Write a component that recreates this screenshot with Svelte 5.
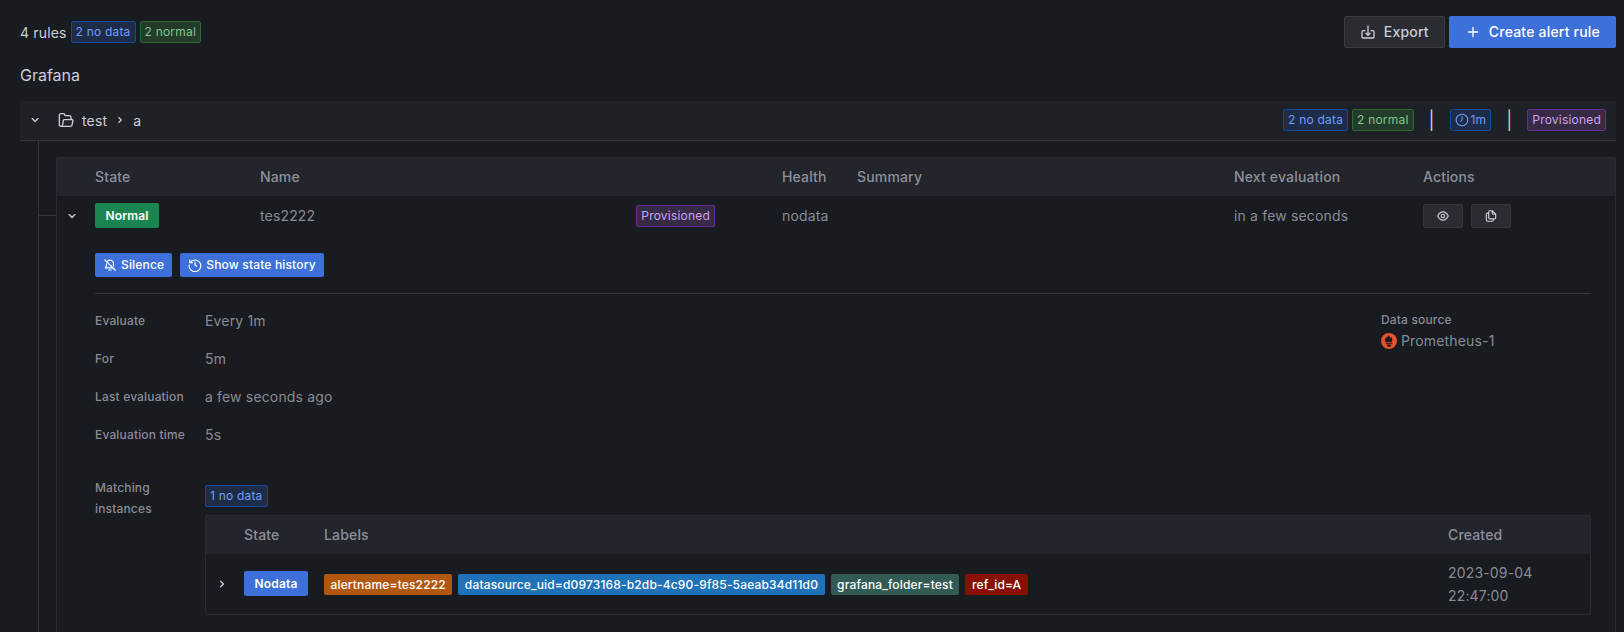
<script>
  const labels = [
    { text: 'alertname=tes2222', color: '#b2570f' },
    { text: 'datasource_uid=d0973168-b2db-4c90-9f85-5aeab34d11d0', color: '#1f72b8' },
    { text: 'grafana_folder=test', color: '#315b54' },
    { text: 'ref_id=A', color: '#890f02' }
  ];
  const details = [
    ['Evaluate', 'Every 1m'],
    ['For', '5m'],
    ['Last evaluation', 'a few seconds ago'],
    ['Evaluation time', '5s']
  ];
</script>

{#snippet down(size)}
  <svg width={size} height={size} viewBox="0 0 24 24" fill="currentColor"><path d="M17,9.17a1,1,0,0,0-1.41,0L12,12.71,8.46,9.17a1,1,0,0,0-1.41,0,1,1,0,0,0,0,1.42l4.24,4.24a1,1,0,0,0,1.42,0L17,10.59A1,1,0,0,0,17,9.17Z"/></svg>
{/snippet}
{#snippet right(size)}
  <svg width={size} height={size} viewBox="0 0 24 24" fill="currentColor"><path d="M14.83,11.29,10.59,7.05a1,1,0,0,0-1.42,0,1,1,0,0,0,0,1.41L12.71,12,9.17,15.54a1,1,0,0,0,0,1.41,1,1,0,0,0,.71.29,1,1,0,0,0,.71-.29l4.24-4.24A1,1,0,0,0,14.83,11.29Z"/></svg>
{/snippet}

<div class="page">
  <div class="top">
    <div class="summary">
      <span class="count">4 rules</span>
      <span class="badge blue">2 no data</span>
      <span class="badge green">2 normal</span>
    </div>
    <div class="top-actions">
      <button class="btn secondary">
        <svg width="16" height="16" viewBox="0 0 24 24" fill="currentColor"><path d="M19,9H16.5a1,1,0,0,0,0,2H19a1,1,0,0,1,1,1v7a1,1,0,0,1-1,1H5a1,1,0,0,1-1-1V12a1,1,0,0,1,1-1H7.5a1,1,0,0,0,0-2H5a3,3,0,0,0-3,3v7a3,3,0,0,0,3,3H19a3,3,0,0,0,3-3V12A3,3,0,0,0,19,9ZM8.29,13.29a1,1,0,0,0,0,1.42l3,3a1,1,0,0,0,1.42,0l3-3a1,1,0,0,0-1.42-1.42L13,14.59V3a1,1,0,0,0-2,0V14.59l-1.29-1.3A1,1,0,0,0,8.29,13.29Z"/></svg>
        Export
      </button>
      <button class="btn primary">
        <svg width="16" height="16" viewBox="0 0 24 24" fill="currentColor"><path d="M19,11H13V5a1,1,0,0,0-2,0v6H5a1,1,0,0,0,0,2h6v6a1,1,0,0,0,2,0V13h6a1,1,0,0,0,0-2Z"/></svg>
        Create alert rule
      </button>
    </div>
  </div>

  <h2 class="ds-title">Grafana</h2>

  <div class="group-head">
    <span class="group-chevron">{@render down(16)}</span>
    <svg class="folder" width="16" height="16" viewBox="0 0 24 24" fill="none" stroke="currentColor" stroke-width="2" stroke-linejoin="round" stroke-linecap="round"><path d="M4.500 21.500A2.500 2.500 0 0 1 2 19V5a2.500 2.500 0 0 1 2.500-2.500h3.600a2 2 0 0 1 1.900 1.400l.5 1.600H17a2.500 2.500 0 0 1 2.500 2.500v3"/><path d="M4.500 21.500c1.200 0 2.100-.8 2.300-2l1.300-7a1.500 1.500 0 0 1 1.500-1h11.800a1 1 0 0 1 1 1.200l-1.400 7a2.400 2.400 0 0 1-2.400 1.800Z"/></svg>
    <span class="crumb">test</span>
    <span class="crumb-sep">{@render right(14)}</span>
    <span class="crumb">a</span>
    <div class="group-meta">
      <span class="badge blue">2 no data</span>
      <span class="badge green">2 normal</span>
      <span class="pipe first">|</span>
      <span class="badge blue clock">
        <svg width="14" height="14" viewBox="0 0 24 24" fill="none" stroke="currentColor" stroke-width="1.800"><circle cx="12" cy="12" r="10"/><path d="M12 6v6l-3 3"/></svg>1m
      </span>
      <span class="pipe second">|</span>
      <span class="badge purple">Provisioned</span>
    </div>
  </div>

  <div class="tree">
    <div class="branch"></div>
    <div class="rule-card">
      <div class="rule-grid rule-head">
        <span></span><span>State</span><span>Name</span><span>Health</span><span>Summary</span><span>Next evaluation</span><span>Actions</span>
      </div>
      <div class="rule-grid rule-row">
        <span class="row-chevron">{@render down(16)}</span>
        <span><span class="state normal">Normal</span></span>
        <span class="name-cell">tes2222<span class="badge purple">Provisioned</span></span>
        <span>nodata</span>
        <span></span>
        <span>in a few seconds</span>
        <span class="row-actions">
          <button class="icon-btn" aria-label="View">
            <svg width="14" height="14" viewBox="0 0 24 24" fill="currentColor"><path d="M21.92,11.6C19.9,6.91,16.1,4,12,4S4.1,6.91,2.08,11.6a1,1,0,0,0,0,.8C4.1,17.09,7.9,20,12,20s7.9-2.91,9.92-7.6A1,1,0,0,0,21.92,11.6ZM12,18c-3.17,0-6.17-2.29-7.9-6C5.83,8.29,8.83,6,12,6s6.17,2.29,7.9,6C18.17,15.71,15.17,18,12,18ZM12,8a4,4,0,1,0,4,4A4,4,0,0,0,12,8Zm0,6a2,2,0,1,1,2-2A2,2,0,0,1,12,14Z"/></svg>
          </button>
          <button class="icon-btn" aria-label="Copy">
            <svg width="14" height="14" viewBox="0 0 24 24" fill="currentColor"><path d="M21,8.94a1.31,1.31,0,0,0-.06-.27l0-.09a1.07,1.07,0,0,0-.19-.28h0l-6-6h0a1.07,1.07,0,0,0-.28-.19.32.32,0,0,0-.09,0A.88.88,0,0,0,14.05,2H10A3,3,0,0,0,7,5V6H6A3,3,0,0,0,3,9V19a3,3,0,0,0,3,3h8a3,3,0,0,0,3-3V18h1a3,3,0,0,0,3-3V9S21,9,21,8.94ZM15,5.41,17.59,8H16a1,1,0,0,1-1-1ZM15,19a1,1,0,0,1-1,1H6a1,1,0,0,1-1-1V9A1,1,0,0,1,6,8H7v7a3,3,0,0,0,3,3h5Zm4-4a1,1,0,0,1-1,1H10a1,1,0,0,1-1-1V5a1,1,0,0,1,1-1h3V7a3,3,0,0,0,3,3h3Z"/></svg>
          </button>
        </span>
      </div>

      <div class="rule-body">
        <div class="rule-buttons">
          <button class="btn small primary">
            <svg width="14" height="14" viewBox="0 0 24 24" fill="none" stroke="currentColor" stroke-width="2" stroke-linecap="round" stroke-linejoin="round"><path d="M3 3l18 18"/><path d="M8 5.200A6 6 0 0 1 18 10v3.500M6 10v3.500L4 17h13"/><path d="M10 20.500h4"/></svg>
            Silence
          </button>
          <button class="btn small primary">
            <svg width="14" height="14" viewBox="0 0 24 24" fill="none" stroke="currentColor" stroke-width="2" stroke-linecap="round" stroke-linejoin="round"><path d="M3.500 8A10 10 0 1 1 2 12"/><path d="M3 3.500V8.200h4.700"/><path d="M12 7v5l3 2"/></svg>
            Show state history
          </button>
        </div>

        <div class="detail-cols">
          <div class="detail-left">
            {#each details as [k, v]}
              <div class="detail"><span class="key">{k}</span><span class="val">{v}</span></div>
            {/each}
          </div>
          <div class="detail-right">
            <div class="key ds-key">Data source</div>
            <div class="val ds-val">
              <svg width="16" height="16" viewBox="0 0 24 24"><circle cx="12" cy="12" r="12" fill="#e6522c"/><path fill="#181b1f" d="M12 3c.6 2.400 1.800 2.600 1.500 4.800 1-.4 1.400-1.400 1.500-2.100 2 2.400 2.700 5 1.200 7.900H6.800C5.300 10.700 6 8 7.800 6c.1 1 .6 1.600 1.300 2C8.700 5.700 11 5 12 3Z"/><path fill="#181b1f" d="M6.800 14.600h10.400v1.700H6.800zM8.500 17.300h7c-.4 2.300-1.800 3.700-3.500 3.700s-3.100-1.400-3.500-3.700Z"/></svg>
              Prometheus-1
            </div>
          </div>
        </div>

        <div class="instances">
          <div class="key instances-key">Matching instances</div>
          <div class="instances-main">
            <span class="badge blue">1 no data</span>
            <div class="inst-card">
              <div class="inst-grid inst-head">
                <span></span><span>State</span><span>Labels</span><span>Created</span>
              </div>
              <div class="inst-grid inst-row">
                <span class="inst-chevron">{@render right(16)}</span>
                <span><span class="state nodata">Nodata</span></span>
                <span class="labels">
                  {#each labels as l}
                    <span class="label" style:background={l.color}>{l.text}</span>
                  {/each}
                </span>
                <span class="created">2023-09-04 22:47:00</span>
              </div>
            </div>
          </div>
        </div>
      </div>
    </div>
  </div>
</div>

<style>
  :global(body) {
    margin: 0;
    background: #181b1f;
  }
  .page {
    height: 632px;
    overflow: hidden;
    box-sizing: border-box;
    padding: 16px 8px 0 20px;
    font-family: Inter, "Noto Sans", sans-serif;
    font-size: 14px;
    line-height: 21px;
    letter-spacing: 0.16px;
    color: #ccccdc;
    background: #181b1f;
  }
  .top {
    display: flex;
    justify-content: space-between;
    align-items: center;
    height: 32px;
  }
  .summary {
    display: flex;
    align-items: center;
    gap: 4px;
  }
  .top-actions { display: flex; gap: 4px; }
  .badge {
    display: inline-flex;
    align-items: center;
    height: 22px;
    box-sizing: border-box;
    padding: 0 4px;
    font-size: 12px;
    line-height: 20px;
    letter-spacing: 0.2px;
    border: 1px solid;
    border-radius: 2px;
    white-space: nowrap;
  }
  .blue { color: #6e9fff; background: #1e2c47; border-color: #134a9b; }
  .green { color: #7dc98a; background: #243a2b; border-color: #2a6a36; }
  .purple { color: #cfa0f0; background: #372a44; border-color: #6b2d92; }
  .btn {
    display: inline-flex;
    align-items: center;
    gap: 8px;
    height: 32px;
    box-sizing: border-box;
    padding: 0 15px;
    font: 500 14px/32px Inter, "Noto Sans", sans-serif;
    letter-spacing: 0.2px;
    border-radius: 2px;
    border: 1px solid transparent;
    white-space: nowrap;
  }
  .btn.primary { background: #3d71d9; color: #fff; }
  .btn.secondary {
    background: #2a2c31;
    border-color: #3a3c42;
    color: #ccccdc;
  }
  .btn.small {
    height: 24px;
    padding: 0 7px;
    gap: 4px;
    font-size: 12px;
    line-height: 22px;
    letter-spacing: 0.17px;
  }
  .ds-title {
    margin: 16px 0 0;
    font-size: 16px;
    font-weight: 400;
    line-height: 22px;
    letter-spacing: 0;
    height: 37px;
  }
  .group-head {
    display: flex;
    align-items: center;
    height: 40px;
    box-sizing: border-box;
    background: #1e2126;
    border-bottom: 1px solid #34363b;
    padding-bottom: 1px;
  }
  .group-chevron { display: flex; margin-left: 7px; width: 31px; color: #ccccdc; }
  .folder { margin-right: 8px; }
  .crumb-sep { display: flex; margin: 0 6px; }
  .group-meta {
    margin-left: auto;
    margin-right: 10px;
    display: flex;
    align-items: center;
    gap: 4px;
  }
  .clock { gap: 2px; }
  .pipe { font-size: 18px; margin: 0 11px; letter-spacing: 0; }
  .pipe.second { color: #d9c0a8; }
  .pipe.first { color: #c0d0e8; }
  .tree {
    position: relative;
    margin-left: 18px;
    padding: 16px 0 0 18px;
    border-left: 1px solid #34363b;
    height: 500px;
    box-sizing: border-box;
  }
  .branch {
    position: absolute;
    left: 0;
    top: 74px;
    width: 18px;
    height: 1px;
    background: #34363b;
  }
  .rule-card {
    border: 1px solid #2a2c31;
    border-radius: 2px;
    height: 600px;
    margin-left: -1px;
  }
  .rule-grid {
    display: grid;
    grid-template-columns: 38px 165px 522px 75px 377px 189px 1fr;
    align-items: center;
  }
  .rule-head {
    height: 38px;
    box-sizing: border-box;
    padding-bottom: 2px;
    background: #22252b;
    color: rgba(204, 204, 220, 0.65);
    font-weight: 500;
  }
  .rule-row {
    height: 39px;
    color: rgba(204, 204, 220, 0.65);
  }
  .row-chevron { display: flex; margin-left: 7px; color: #ccccdc; }
  .state {
    display: inline-flex;
    align-items: center;
    justify-content: center;
    width: 64px;
    height: 25px;
    border-radius: 2px;
    color: #fff;
    font-size: 12px;
    font-weight: 600;
  }
  .normal { background: #1b8552; }
  .nodata { background: #3d71d9; }
  .name-cell {
    display: flex;
    align-items: center;
    justify-content: space-between;
    padding-right: 67px;
  }
  .row-actions { display: flex; gap: 8px; }
  .icon-btn {
    display: flex;
    align-items: center;
    justify-content: center;
    width: 40px;
    height: 24px;
    padding: 0;
    background: #2a2c31;
    border: 1px solid #34363b;
    border-radius: 2px;
    color: #ccccdc;
  }
  .rule-body { padding: 18px 24px 0 38px; }
  .rule-buttons {
    display: flex;
    gap: 8px;
    padding-bottom: 16px;
    border-bottom: 1px solid #34363b;
  }
  .detail-cols {
    display: flex;
    justify-content: space-between;
    padding-top: 15px;
  }
  .detail {
    display: flex;
    align-items: center;
    height: 22px;
    margin-bottom: 16px;
  }
  .key {
    font-size: 12px;
    font-weight: 500;
    color: rgba(204, 204, 220, 0.65);
  }
  .detail .key { width: 110px; }
  .val { color: rgba(204, 204, 220, 0.65); }
  .detail-right { width: 210px; }
  .ds-key { height: 21px; line-height: 21px; }
  .ds-val { display: flex; align-items: center; gap: 4px; }
  .instances {
    display: flex;
    margin-top: 23px;
  }
  .instances-key {
    width: 110px;
    flex: none;
    line-height: 21px;
    margin-top: -7px;
  }
  .instances-main { flex: 1; min-width: 0; }
  .inst-card {
    margin-top: 8px;
    border: 1px solid #2a2c31;
    border-radius: 2px;
    height: 100px;
    box-sizing: border-box;
  }
  .inst-grid {
    display: grid;
    grid-template-columns: 38px 80px 1fr 142px;
    align-items: center;
  }
  .inst-head {
    height: 38px;
    box-sizing: border-box;
    padding-bottom: 2px;
    background: #22252b;
    color: rgba(204, 204, 220, 0.65);
    font-weight: 500;
  }
  .inst-row { height: 59px; }
  .inst-chevron { display: flex; margin-left: 8px; color: #ccccdc; }
  .labels { display: flex; gap: 6px; padding-top: 1px; }
  .label {
    display: inline-flex;
    align-items: center;
    height: 21px;
    padding: 0 6.5px;
    font-size: 12px;
    font-weight: 500;
    letter-spacing: 0.16px;
    border-radius: 2px;
    color: #fff;
    white-space: nowrap;
  }
  .created {
    color: rgba(204, 204, 220, 0.65);
    line-height: 23px;
    width: 110px;
  }
</style>
